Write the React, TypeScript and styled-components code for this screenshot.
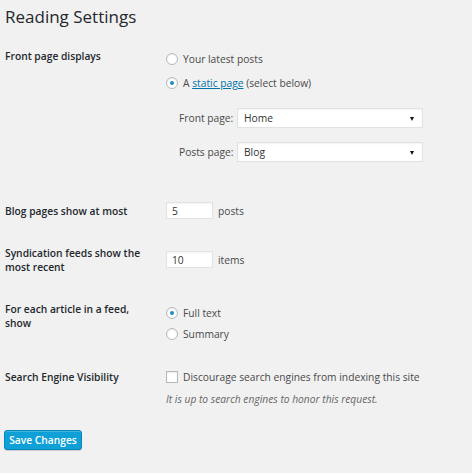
import styled, { createGlobalStyle } from 'styled-components';

const GlobalStyle = createGlobalStyle`
  body {
    margin: 0;
    background: #fff;
    font-family: 'Open Sans', 'Noto Sans', sans-serif;
    font-size: 10.25px;
    color: #4a4a4a;
  }
  * {
    box-sizing: border-box;
  }
`;

const Page = styled.div`
  width: 472px;
  min-height: 473px;
  padding: 0 5px;
  background: #f1f1f1;
  overflow: hidden;
`;

const Title = styled.h1`
  margin: 5px 0 0;
  font-size: 17px;
  font-weight: 400;
  line-height: 24px;
  color: #23282d;
`;

const Row = styled.div<{ $gap: number }>`
  display: grid;
  grid-template-columns: 161px 1fr;
  margin-top: ${({ $gap }) => `${$gap}px`};
`;

const Label = styled.div`
  padding-top: 2px;
  font-weight: 600;
  line-height: 14px;
  color: #23282d;
`;

const Field = styled.div<{ $offset?: number }>`
  padding-top: ${({ $offset = 0 }) => `${$offset}px`};
`;

const Option = styled.label<{ $height: number }>`
  display: flex;
  align-items: center;
  gap: 5px;
  height: ${({ $height }) => `${$height}px`};
  line-height: 14px;
  white-space: nowrap;
`;

const Radio = styled.input.attrs({ type: 'radio' })`
  appearance: none;
  flex-shrink: 0;
  margin: 0;
  width: 12px;
  height: 12px;
  border: 1px solid #b4b9be;
  border-radius: 50%;
  background: #fff;
  box-shadow: inset 0 1px 2px rgba(0, 0, 0, 0.07);
  display: grid;
  place-items: center;

  &:checked::before {
    content: '';
    width: 4px;
    height: 4px;
    border-radius: 50%;
    background: #1e8cbe;
  }
`;

const Checkbox = styled.input.attrs({ type: 'checkbox' })`
  appearance: none;
  flex-shrink: 0;
  margin: 0;
  width: 12px;
  height: 12px;
  border: 1px solid #b4b9be;
  background: #fff;
  box-shadow: inset 0 1px 2px rgba(0, 0, 0, 0.07);
`;

const Link = styled.a`
  color: #0073aa;
  text-decoration: underline;
`;

const SelectList = styled.div`
  display: flex;
  flex-direction: column;
  gap: 14px;
  margin-top: 13px;
  padding-left: 13px;
`;

const SelectRow = styled.label`
  display: flex;
  align-items: center;
  white-space: nowrap;
`;

const SelectLabel = styled.span`
  flex-shrink: 0;
  width: 58px;
`;

const Select = styled.div`
  position: relative;
  flex-shrink: 0;
  width: 186px;
  height: 20px;
  padding: 0 6px;
  display: flex;
  align-items: center;
  background: #fff;
  border: 1px solid #e2e2e2;
  box-shadow: inset 0 1px 2px rgba(0, 0, 0, 0.05);
  color: #333;

  &::after {
    content: '';
    position: absolute;
    right: 8px;
    top: 8px;
    border-left: 2.5px solid transparent;
    border-right: 2.5px solid transparent;
    border-top: 4px solid #111;
  }
`;

const Inline = styled.div`
  display: flex;
  align-items: center;
  gap: 5px;
`;

const NumberInput = styled.input.attrs({ type: 'text', readOnly: true })`
  width: 47px;
  height: 17px;
  margin: 0;
  padding: 0 5px;
  border: 1px solid #e2e2e2;
  background: #fff;
  box-shadow: inset 0 1px 2px rgba(0, 0, 0, 0.05);
  font: inherit;
  color: #333;
  outline: none;
`;

const Description = styled.p`
  margin: 8px 0 0;
  line-height: 14px;
  font-style: italic;
  color: #666;
`;

const SubmitButton = styled.button`
  margin: 24px 0 0 -1px;
  width: 78px;
  height: 20px;
  padding: 0;
  border: 1px solid #0089bd;
  border-radius: 3px;
  background: #0ea0d6;
  box-shadow: inset 0 1px 0 rgba(120, 200, 230, 0.5), 0 1px 0 rgba(0, 0, 0, 0.15);
  color: #fff;
  font: inherit;
  font-size: 10.25px;
  font-weight: 600;
`;

const App = () => (
  <>
    <GlobalStyle />
    <Page>
      <Title>Reading Settings</Title>

      <Row $gap={18}>
        <Label>Front page displays</Label>
        <Field>
          <Option $height={24}>
            <Radio name="front" />
            Your latest posts
          </Option>
          <Option $height={24}>
            <Radio name="front" defaultChecked />
            <span>
              A <Link>static page</Link> (select below)
            </span>
          </Option>
          <SelectList>
            <SelectRow>
              <SelectLabel>Front page:</SelectLabel>
              <Select>Home</Select>
            </SelectRow>
            <SelectRow>
              <SelectLabel>Posts page:</SelectLabel>
              <Select>Blog</Select>
            </SelectRow>
          </SelectList>
        </Field>
      </Row>

      <Row $gap={40}>
        <Label>Blog pages show at most</Label>
        <Field>
          <Inline>
            <NumberInput value="5" />
            posts
          </Inline>
        </Field>
      </Row>

      <Row $gap={25}>
        <Label>
          Syndication feeds show the
          <br />
          most recent
        </Label>
        <Field $offset={7}>
          <Inline>
            <NumberInput value="10" />
            items
          </Inline>
        </Field>
      </Row>

      <Row $gap={26}>
        <Label>
          For each article in a feed,
          <br />
          show
        </Label>
        <Field $offset={2}>
          <Option $height={21}>
            <Radio name="feed" defaultChecked />
            Full text
          </Option>
          <Option $height={21}>
            <Radio name="feed" />
            Summary
          </Option>
        </Field>
      </Row>

      <Row $gap={24}>
        <Label>Search Engine Visibility</Label>
        <Field $offset={2}>
          <Option $height={14}>
            <Checkbox />
            Discourage search engines from indexing this site
          </Option>
          <Description>It is up to search engines to honor this request.</Description>
        </Field>
      </Row>

      <SubmitButton>Save Changes</SubmitButton>
    </Page>
  </>
);

export default App;
